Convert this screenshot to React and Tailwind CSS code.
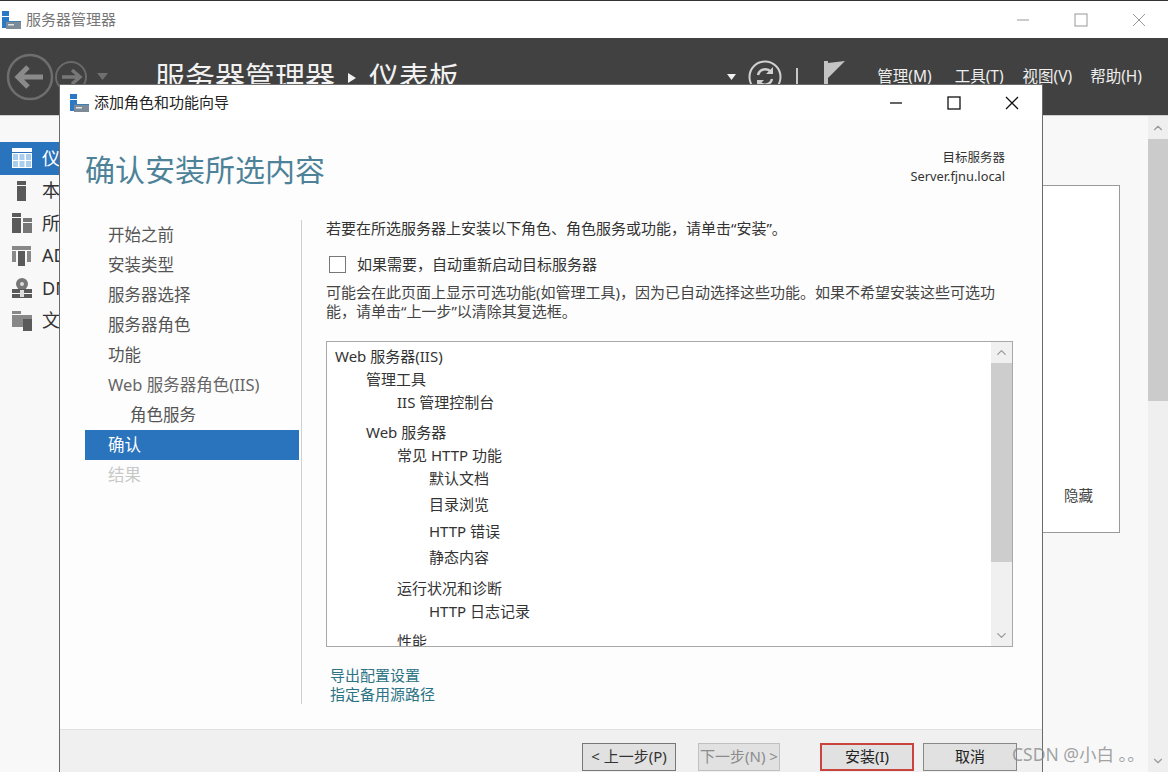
import { ChevronUp, ChevronDown } from 'lucide-react'

const sideItems = [
  { label: '仪表板', icon: 'grid', active: true },
  { label: '本地服务器', icon: 'tower' },
  { label: '所有服务器', icon: 'towers' },
  { label: 'AD DS', icon: 'ad' },
  { label: 'DNS', icon: 'dns' },
  { label: '文件和存储服务', icon: 'folder' },
]

const wizardSteps = [
  { label: '开始之前', cls: 'pl-[23px] text-[#555]' },
  { label: '安装类型', cls: 'pl-[23px] text-[#555]' },
  { label: '服务器选择', cls: 'pl-[23px] text-[#555]' },
  { label: '服务器角色', cls: 'pl-[23px] text-[#555]' },
  { label: '功能', cls: 'pl-[23px] text-[#555]' },
  { label: 'Web 服务器角色(IIS)', cls: 'pl-[23px] text-[#666]' },
  { label: '角色服务', cls: 'pl-[45px] text-[#555]' },
  { label: '确认', cls: 'pl-[23px] bg-[#2a73bd] text-white' },
  { label: '结果', cls: 'pl-[23px] text-[#c8c8c8]' },
]

const treeRows = [
  { label: 'Web 服务器(IIS)', cls: 'pl-[8px]' },
  { label: '管理工具', cls: 'pl-[39px]' },
  { label: 'IIS 管理控制台', cls: 'pl-[70px]' },
  { label: 'Web 服务器', cls: 'pl-[39px] mt-[7px]' },
  { label: '常见 HTTP 功能', cls: 'pl-[70px]' },
  { label: '默认文档', cls: 'pl-[102px]' },
  { label: '目录浏览', cls: 'pl-[102px] mt-[3px]' },
  { label: 'HTTP 错误', cls: 'pl-[102px] mt-[4px]' },
  { label: '静态内容', cls: 'pl-[102px] mt-[3px]' },
  { label: '运行状况和诊断', cls: 'pl-[70px] mt-[8px]' },
  { label: 'HTTP 日志记录', cls: 'pl-[102px]' },
  { label: '性能', cls: 'pl-[70px] mt-[7px]' },
]

function ServerIcon() {
  return (
    <svg width="20" height="20" viewBox="0 0 20 20" className="shrink-0">
      <rect x="1" y="1" width="7" height="5" fill="#2a78c6" />
      <rect x="1" y="7" width="7" height="11" fill="#2a78c6" />
      <rect x="5" y="12" width="15" height="7" fill="#7d8b99" />
      <rect x="5" y="11" width="15" height="1" fill="#3f7fb8" />
      <rect x="7" y="14" width="6" height="1.5" fill="#dfe5ea" />
    </svg>
  )
}

function SideIcon({ name }) {
  const c = '#5a5a5a'
  if (name === 'grid') {
    return (
      <svg width="20" height="20" viewBox="0 0 20 20">
        <rect x="0" y="0" width="20" height="4" fill="#ffffff" />
        <rect x="0" y="5" width="20" height="15" fill="#ffffff" />
        <rect x="1" y="6" width="5" height="6" fill="#a9cdec" />
        <rect x="7.5" y="6" width="5" height="6" fill="#a9cdec" />
        <rect x="14" y="6" width="5" height="6" fill="#a9cdec" />
        <rect x="1" y="13" width="5" height="6" fill="#a9cdec" />
        <rect x="7.5" y="13" width="5" height="6" fill="#a9cdec" />
        <rect x="14" y="13" width="5" height="6" fill="#a9cdec" />
      </svg>
    )
  }
  if (name === 'tower') {
    return (
      <svg width="20" height="20" viewBox="0 0 20 20">
        <rect x="5" y="0" width="9" height="4" fill={c} />
        <rect x="5" y="5" width="9" height="15" fill={c} />
      </svg>
    )
  }
  if (name === 'towers') {
    return (
      <svg width="20" height="20" viewBox="0 0 20 20">
        <rect x="0" y="0" width="9" height="4" fill={c} />
        <rect x="0" y="5" width="9" height="15" fill={c} />
        <rect x="11" y="5" width="9" height="4" fill="#777" />
        <rect x="11" y="10" width="9" height="10" fill="#777" />
      </svg>
    )
  }
  if (name === 'ad') {
    return (
      <svg width="20" height="20" viewBox="0 0 20 20">
        <rect x="0" y="0" width="19" height="4" fill="#888" />
        <rect x="0" y="5" width="4" height="11" fill="#888" />
        <rect x="15" y="5" width="4" height="11" fill="#888" />
        <rect x="6" y="5" width="7" height="15" fill={c} />
      </svg>
    )
  }
  if (name === 'dns') {
    return (
      <svg width="20" height="20" viewBox="0 0 20 20">
        <circle cx="10" cy="6" r="6" fill="#777" />
        <circle cx="10" cy="6" r="2" fill="#ddd" />
        <rect x="0" y="11" width="20" height="4" fill={c} />
        <rect x="0" y="16" width="20" height="4" fill={c} />
        <rect x="8" y="12" width="4" height="7" fill="#ddd" />
      </svg>
    )
  }
  return (
    <svg width="20" height="20" viewBox="0 0 20 20">
      <rect x="0" y="0" width="9" height="3" fill="#888" />
      <rect x="0" y="4" width="20" height="12" fill="#888" />
      <rect x="11" y="8" width="9" height="12" fill={c} />
    </svg>
  )
}

function WindowButtons({ color, stroke }) {
  return (
    <div className="flex items-center gap-[44px]">
      <svg width="14" height="14" viewBox="0 0 14 14">
        <path d="M1 7H13" stroke={color} strokeWidth={stroke} />
      </svg>
      <svg width="14" height="14" viewBox="0 0 14 14">
        <rect x="1" y="1" width="12" height="12" fill="none" stroke={color} strokeWidth={stroke} />
      </svg>
      <svg width="14" height="14" viewBox="0 0 14 14">
        <path d="M1 1L13 13M13 1L1 13" stroke={color} strokeWidth={stroke} />
      </svg>
    </div>
  )
}

function NavArrows() {
  return (
    <svg width="110" height="52" viewBox="0 0 110 52" className="shrink-0">
      <circle cx="24" cy="26" r="22" fill="none" stroke="#6e6e6e" strokeWidth="2.5" />
      <path d="M13 26H37M22 16L12 26L22 36" fill="none" stroke="#8a8a8a" strokeWidth="5" />
      <circle cx="65" cy="26" r="15" fill="none" stroke="#6a6a6a" strokeWidth="2" />
      <path d="M56 26H73M66 19L74 26L66 33" fill="none" stroke="#777" strokeWidth="3.5" />
      <path d="M91 22H102L96.5 29Z" fill="#6f6f6f" />
    </svg>
  )
}

function Toolbar() {
  return (
    <div className="flex items-center">
      <svg width="9" height="6" viewBox="0 0 9 6" className="mr-[12px]">
        <path d="M0 0H9L4.5 6Z" fill="#f0f0f0" />
      </svg>
      <svg width="34" height="34" viewBox="0 0 34 34">
        <circle cx="17" cy="17" r="15.5" fill="none" stroke="#d0d0d0" strokeWidth="2" />
        <path d="M10 15a7.5 7.5 0 0 1 13-3M24 19a7.5 7.5 0 0 1-13 3" fill="none" stroke="#d0d0d0" strokeWidth="2.5" />
        <path d="M25 7V14H18Z" fill="#d0d0d0" />
        <path d="M9 27V20H16Z" fill="#d0d0d0" />
      </svg>
      <div className="ml-[14px] h-[18px] w-[2px] bg-[#c8c8c8]" />
      <svg width="21" height="26" viewBox="0 0 21 26" className="mb-[6px] ml-[26px]">
        <path d="M0 0H4V26H0Z" fill="#c4c4c4" />
        <path d="M4 2L21 0L4 17Z" fill="#c4c4c4" />
      </svg>
    </div>
  )
}

function FooterButton({ children, cls }) {
  return (
    <button className={'flex h-[28px] items-center justify-center whitespace-nowrap bg-[#e1e1e1] pb-[2px] text-[15px] ' + cls}>
      {children}
    </button>
  )
}

function Wizard() {
  return (
    <div className="absolute bottom-0 left-[59px] top-[84px] flex w-[984px] flex-col border-x border-t border-[#6b6b6b] bg-[#fdfdfd]">
      <div className="flex h-[35px] shrink-0 items-center bg-white pl-[9px] pr-[23px]">
        <ServerIcon />
        <span className="ml-[5px] text-[15px] text-[#222]">添加角色和功能向导</span>
        <div className="ml-auto">
          <WindowButtons color="#111" stroke="1.3" />
        </div>
      </div>

      <div className="flex h-[100px] shrink-0 justify-between pl-[25px] pr-[37px]">
        <h1 className="mt-[28px] text-[30px] font-normal leading-[44px] text-[#4d8298]">确认安装所选内容</h1>
        <div className="mt-[29px] text-right leading-[18px] text-[#333]">
          <div className="text-[12.5px]">目标服务器</div>
          <div className="text-[12.8px]">Server.fjnu.local</div>
        </div>
      </div>

      <div className="flex min-h-0 flex-1">
        <nav className="ml-[25px] w-[214px] shrink-0">
          {wizardSteps.map((s) => (
            <div key={s.label} className={'flex h-[30px] items-center pt-px text-[16.5px] ' + s.cls}>
              {s.label}
            </div>
          ))}
        </nav>
        <div className="mb-[25px] ml-[2px] w-px bg-[#d0d0d0]" />
        <div className="ml-[24px] w-[687px]">
          <p className="flex h-[16px] items-center text-[15px] text-[#333]">若要在所选服务器上安装以下角色、角色服务或功能，请单击“安装”。</p>
          <label className="mt-[19px] flex h-[18px] items-center text-[15px] text-[#333]">
            <span className="ml-[3px] h-[17px] w-[17px] border border-[#777] bg-white" />
            <span className="ml-[11px]">如果需要，自动重新启动目标服务器</span>
          </label>
          <p className="mt-[10px] whitespace-nowrap text-[15px] leading-[19px] text-[#444]">
            可能会在此页面上显示可选功能(如管理工具)，因为已自动选择这些功能。如果不希望安装这些可选功
            <br />
            能，请单击“上一步”以清除其复选框。
          </p>
          <div className="mt-[20px] flex h-[306px] border border-[#a8a8a8] bg-white">
            <div className="min-w-0 flex-1 overflow-hidden pt-[3px] text-[15px] text-[#333]">
              {treeRows.map((r) => (
                <div key={r.label} className={'flex h-[23px] items-center whitespace-nowrap ' + r.cls}>
                  {r.label}
                </div>
              ))}
            </div>
            <div className="flex w-[21px] shrink-0 flex-col bg-[#f0f0f0]">
              <div className="flex h-[21px] items-center justify-center">
                <ChevronUp size={15} className="text-[#999]" />
              </div>
              <div className="h-[199px] bg-[#cdcdcd]" />
              <div className="flex-1" />
              <div className="flex h-[21px] items-center justify-center">
                <ChevronDown size={15} className="text-[#999]" />
              </div>
            </div>
          </div>
          <div className="ml-[4px] mt-[19px] text-[15px] leading-[19px] text-[#2b7385]">
            <div>导出配置设置</div>
            <div>指定备用源路径</div>
          </div>
        </div>
      </div>

      <div className="flex h-[43px] shrink-0 items-end border-t border-[#e2e2e2] bg-[#f0f0f0] pb-px pl-[522px]">
        <FooterButton cls="w-[94px] border border-[#777] text-[#333]">&lt; 上一步(P)</FooterButton>
        <FooterButton cls="ml-[22px] w-[82px] border border-[#c0c0c0] text-[#8c8c8c]">下一步(N) &gt;</FooterButton>
        <FooterButton cls="ml-[40px] w-[94px] border-2 border-[#c8443c] text-[#222]">安装(I)</FooterButton>
        <FooterButton cls="ml-[9px] w-[94px] border border-[#888] text-[#222]">取消</FooterButton>
      </div>
    </div>
  )
}

export default function App() {
  return (
    <div className="relative flex h-[772px] w-[1168px] flex-col overflow-hidden bg-white font-['Noto_Sans','Noto_Sans_CJK_SC',sans-serif]">
      <div className="flex h-[38px] shrink-0 items-center border-t border-[#333] pl-[1px] pr-[22px]">
        <ServerIcon />
        <span className="ml-[5px] text-[15px] text-[#777]">服务器管理器</span>
        <div className="ml-auto">
          <WindowButtons color="#999" stroke="1" />
        </div>
      </div>

      <div className="flex h-[77px] shrink-0 items-center bg-[#414141] pl-[6px] pr-[26px]">
        <NavArrows />
        <div className="ml-[39px] flex items-center text-[30px] text-[#f2f2f2]">
          <span>服务器管理器</span>
          <svg width="8" height="10" viewBox="0 0 8 10" className="mx-[13px] mt-[3px]">
            <path d="M0 0L8 5L0 10Z" fill="#f2f2f2" />
          </svg>
          <span>仪表板</span>
        </div>
        <div className="ml-auto flex items-center">
          <Toolbar />
          <div className="ml-[32px] flex text-[15.5px] text-[#eeeeee]">
            <span>管理(M)</span>
            <span className="ml-[23px]">工具(T)</span>
            <span className="ml-[19px]">视图(V)</span>
            <span className="ml-[18px]">帮助(H)</span>
          </div>
        </div>
      </div>

      <div className="flex min-h-0 flex-1 border-t border-[#cfcfcf] bg-[#f8f8f9]">
        <aside className="w-[200px] shrink-0 pt-[26px]">
          {sideItems.map((it) => (
            <div
              key={it.label}
              className={'flex h-[32.5px] items-center pl-[12px] text-[18px] ' + (it.active ? 'bg-[#2a73bd] text-white' : 'text-[#333]')}
            >
              <SideIcon name={it.icon} />
              <span className="ml-[10px] whitespace-nowrap">{it.label}</span>
            </div>
          ))}
        </aside>
        <div className="min-w-0 flex-1 pl-[700px] pt-[69px]">
          <div className="flex h-[348px] w-[220px] items-end justify-end border border-[#999] bg-white pb-[25px] pr-[26px] text-[14.5px] text-[#444]">
            隐藏
          </div>
        </div>
        <div className="flex w-[20px] shrink-0 flex-col bg-[#efefef]">
          <div className="flex h-[23px] items-center justify-center">
            <ChevronUp size={14} className="text-[#999]" />
          </div>
          <div className="h-[262px] bg-[#cbcbcb]" />
          <div className="flex-1" />
          <div className="flex h-[23px] items-center justify-center">
            <ChevronDown size={14} className="text-[#999]" />
          </div>
        </div>
      </div>

      <Wizard />

      <div className="absolute bottom-[8px] left-[1012px] whitespace-nowrap text-[17.5px] leading-[20px] text-[#8a8a8a]/80">
        CSDN @小白 。。
      </div>
    </div>
  )
}
